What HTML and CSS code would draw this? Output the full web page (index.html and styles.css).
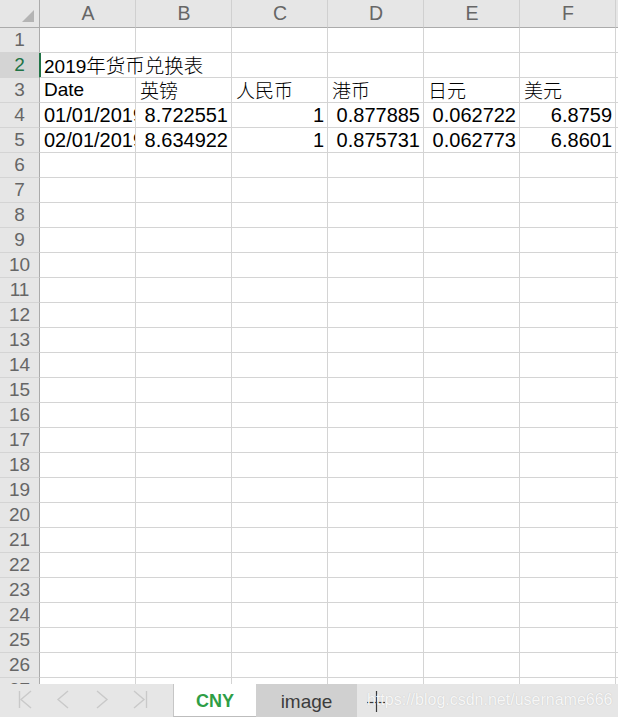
FILE: index.html
```html
<!DOCTYPE html>
<html lang="zh">
<head>
<meta charset="utf-8">
<title>CNY</title>
<link rel="stylesheet" href="styles.css">
</head>
<body>
<div class="app">
  <div class="sheet">
    <div class="row head">
      <div class="corner"><svg width="12" height="12" viewBox="0 0 12 12"><polygon points="12,0 12,12 0,12" fill="#b4b4b4"/></svg></div>
      <b>A</b><b>B</b><b>C</b><b>D</b><b>E</b><b>F</b><b>G</b>
    </div>
    <div class="row"><div class="rh">1</div><i></i><i></i><i></i><i></i><i></i><i></i><i></i></div>
    <div class="row"><div class="rh sel">2</div><i class="title">2019<span class="cjk">年货币兑换表</span></i><i></i><i></i><i></i><i></i><i></i></div>
    <div class="row"><div class="rh">3</div><i>Date</i><i class="cjk">英镑</i><i class="cjk">人民币</i><i class="cjk">港币</i><i class="cjk">日元</i><i class="cjk">美元</i><i></i></div>
    <div class="row"><div class="rh">4</div><i class="date">01/01/2019</i><i class="num">8.722551</i><i class="num">1</i><i class="num">0.877885</i><i class="num">0.062722</i><i class="num">6.8759</i><i></i></div>
    <div class="row"><div class="rh">5</div><i class="date">02/01/2019</i><i class="num">8.634922</i><i class="num">1</i><i class="num">0.875731</i><i class="num">0.062773</i><i class="num">6.8601</i><i></i></div>
    <div class="row"><div class="rh">6</div><i></i><i></i><i></i><i></i><i></i><i></i><i></i></div>
    <div class="row"><div class="rh">7</div><i></i><i></i><i></i><i></i><i></i><i></i><i></i></div>
    <div class="row"><div class="rh">8</div><i></i><i></i><i></i><i></i><i></i><i></i><i></i></div>
    <div class="row"><div class="rh">9</div><i></i><i></i><i></i><i></i><i></i><i></i><i></i></div>
    <div class="row"><div class="rh">10</div><i></i><i></i><i></i><i></i><i></i><i></i><i></i></div>
    <div class="row"><div class="rh">11</div><i></i><i></i><i></i><i></i><i></i><i></i><i></i></div>
    <div class="row"><div class="rh">12</div><i></i><i></i><i></i><i></i><i></i><i></i><i></i></div>
    <div class="row"><div class="rh">13</div><i></i><i></i><i></i><i></i><i></i><i></i><i></i></div>
    <div class="row"><div class="rh">14</div><i></i><i></i><i></i><i></i><i></i><i></i><i></i></div>
    <div class="row"><div class="rh">15</div><i></i><i></i><i></i><i></i><i></i><i></i><i></i></div>
    <div class="row"><div class="rh">16</div><i></i><i></i><i></i><i></i><i></i><i></i><i></i></div>
    <div class="row"><div class="rh">17</div><i></i><i></i><i></i><i></i><i></i><i></i><i></i></div>
    <div class="row"><div class="rh">18</div><i></i><i></i><i></i><i></i><i></i><i></i><i></i></div>
    <div class="row"><div class="rh">19</div><i></i><i></i><i></i><i></i><i></i><i></i><i></i></div>
    <div class="row"><div class="rh">20</div><i></i><i></i><i></i><i></i><i></i><i></i><i></i></div>
    <div class="row"><div class="rh">21</div><i></i><i></i><i></i><i></i><i></i><i></i><i></i></div>
    <div class="row"><div class="rh">22</div><i></i><i></i><i></i><i></i><i></i><i></i><i></i></div>
    <div class="row"><div class="rh">23</div><i></i><i></i><i></i><i></i><i></i><i></i><i></i></div>
    <div class="row"><div class="rh">24</div><i></i><i></i><i></i><i></i><i></i><i></i><i></i></div>
    <div class="row"><div class="rh">25</div><i></i><i></i><i></i><i></i><i></i><i></i><i></i></div>
    <div class="row"><div class="rh">26</div><i></i><i></i><i></i><i></i><i></i><i></i><i></i></div>
    <div class="row"><div class="rh">27</div><i></i><i></i><i></i><i></i><i></i><i></i><i></i></div>
  </div>
  <div class="tabbar">
    <div class="nav">
      <svg width="173" height="33" viewBox="0 0 173 33" fill="none" stroke="#c9c9c9" stroke-width="1.4">
        <path d="M19.5 7v17"/>
        <path d="M31 7l-10 8.5L31 24"/>
        <path d="M68 7l-10 8.5L68 24"/>
        <path d="M97 7l10 8.5L97 24"/>
        <path d="M134 7l10 8.5L134 24"/>
        <path d="M146.5 7v17"/>
      </svg>
    </div>
    <div class="tab active">CNY</div>
    <div class="tab">image</div>
    <div class="rest">
      <svg class="plus" width="18" height="21" viewBox="0 0 18 21" fill="none" stroke="#3a3a3a" stroke-width="1.2">
        <path d="M0 11.5h18"/>
        <path d="M9.5 0v21"/>
      </svg>
      <span class="mark">https://blog.csdn.net/username666</span>
    </div>
  </div>
</div>
</body>
</html>
```

FILE: styles.css
```css
html, body {
  margin: 0;
  padding: 0;
  background: #ffffff;
}
.app {
  width: 618px;
  height: 717px;
  overflow: hidden;
  display: flex;
  flex-direction: column;
  font-family: "Liberation Sans", Arial, "Noto Sans CJK SC", sans-serif;
}
.sheet {
  height: 684px;
  overflow: hidden;
  flex: none;
}
.row {
  display: grid;
  grid-template-columns: 40px repeat(7, 96px);
  grid-auto-rows: 25px;
  width: 712px;
}
.row > i, .row > b {
  font-style: normal;
  box-sizing: border-box;
  border-right: 1px solid #d4d4d4;
  border-bottom: 1px solid #d4d4d4;
  font-size: 19px;
  line-height: 24px;
  white-space: nowrap;
  overflow: hidden;
  color: #000;
  padding: 0 3px 0 4px;
}
.row > i.num,
.row > i.date {
  font-size: 20px;
}
.row > i.num {
  text-align: right;
}
.row > i.title {
  grid-column: span 2;
  box-shadow: inset 1px 0 0 #217346;
  overflow: visible;
}
.row > i.cjk {
  overflow: visible;
}
.cjk {
  font-family: "Noto Sans CJK SC", sans-serif;
  font-weight: 300;
  font-size: 19.5px;
}
.rh {
  box-sizing: border-box;
  background: #e6e6e6;
  border-right: 1px solid #ababab;
  border-bottom: 1px solid #d4d4d4;
  color: #666666;
  font-size: 19px;
  line-height: 24px;
  text-align: center;
}
.rh.sel {
  background: #d4d4d4;
  color: #217346;
  border-right-color: #217346;
}
.head {
  grid-auto-rows: 28px;
}
.head > b {
  font-weight: normal;
  background: #e6e6e6;
  color: #666666;
  text-align: center;
  line-height: 27px;
  font-size: 19.5px;
  border-bottom-color: #ababab;
  border-right-color: #d0d0d0;
}
.corner {
  box-sizing: border-box;
  background: #e6e6e6;
  border-right: 1px solid #ababab;
  border-bottom: 1px solid #ababab;
  display: flex;
  justify-content: flex-end;
  align-items: flex-end;
  padding: 0 5px 5px 0;
}
.corner svg {
  display: block;
}
.tabbar {
  height: 33px;
  flex: none;
  display: flex;
  background: #e6e6e6;
}
.nav {
  width: 173px;
  flex: none;
}
.nav svg {
  display: block;
}
.tab {
  box-sizing: border-box;
  height: 33px;
  flex: none;
  display: flex;
  align-items: center;
  justify-content: center;
  font-size: 19px;
  color: #3c3c3c;
  background: #d0d0d0;
  width: 101px;
  padding-top: 2px;
}
.tab.active {
  width: 83px;
  background: #ffffff;
  border-left: 1px solid #c6c6c6;
  border-bottom: 1px solid #bdbdbd;
  color: #2f9e46;
  font-weight: bold;
  font-size: 18px;
}
.rest {
  position: relative;
  flex: 1;
  display: flex;
  align-items: center;
  padding-left: 10px;
}
.plus {
  display: block;
  margin-top: 2px;
}
.mark {
  position: absolute;
  left: 10px;
  top: 6px;
  font-size: 16px;
  line-height: 20px;
  color: #f7f7f7;
  text-shadow: 0 0 1px rgba(120, 120, 120, 0.35);
  white-space: nowrap;
}
```
